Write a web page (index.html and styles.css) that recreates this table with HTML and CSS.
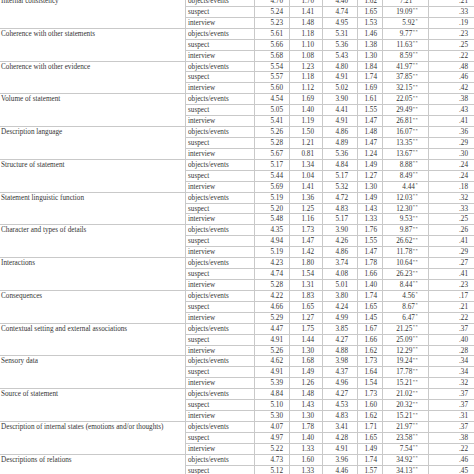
FILE: index.html
```html
<!DOCTYPE html>
<html>
<head>
<meta charset="utf-8">
<link rel="stylesheet" href="styles.css">
</head>
<body>
<div class="tbl">
  <div class="grp">
    <div class="lab">Internal consistency</div>
    <div class="c sub">objects/events</div><div class="c m1">4.70</div><div class="c s1">1.70</div><div class="c m2">4.40</div><div class="c s2">1.62</div><div class="c t">7.21<sup>**</sup></div><div class="c es">.21</div>
    <div class="c sub">suspect</div><div class="c m1">5.24</div><div class="c s1">1.41</div><div class="c m2">4.74</div><div class="c s2">1.65</div><div class="c t">19.09<sup>**</sup></div><div class="c es">.33</div>
    <div class="c sub">interview</div><div class="c m1">5.23</div><div class="c s1">1.48</div><div class="c m2">4.95</div><div class="c s2">1.53</div><div class="c t">5.92<sup>*</sup></div><div class="c es">.19</div>
  </div>
  <div class="grp">
    <div class="lab">Coherence with other statements</div>
    <div class="c sub">objects/events</div><div class="c m1">5.61</div><div class="c s1">1.18</div><div class="c m2">5.31</div><div class="c s2">1.46</div><div class="c t">9.77<sup>**</sup></div><div class="c es">.23</div>
    <div class="c sub">suspect</div><div class="c m1">5.66</div><div class="c s1">1.10</div><div class="c m2">5.36</div><div class="c s2">1.38</div><div class="c t">11.63<sup>**</sup></div><div class="c es">.25</div>
    <div class="c sub">interview</div><div class="c m1">5.68</div><div class="c s1">1.08</div><div class="c m2">5.43</div><div class="c s2">1.30</div><div class="c t">8.59<sup>**</sup></div><div class="c es">.22</div>
  </div>
  <div class="grp">
    <div class="lab">Coherence with other evidence</div>
    <div class="c sub">objects/events</div><div class="c m1">5.54</div><div class="c s1">1.23</div><div class="c m2">4.80</div><div class="c s2">1.84</div><div class="c t">41.97<sup>**</sup></div><div class="c es">.48</div>
    <div class="c sub">suspect</div><div class="c m1">5.57</div><div class="c s1">1.18</div><div class="c m2">4.91</div><div class="c s2">1.74</div><div class="c t">37.85<sup>**</sup></div><div class="c es">.46</div>
    <div class="c sub">interview</div><div class="c m1">5.60</div><div class="c s1">1.12</div><div class="c m2">5.02</div><div class="c s2">1.69</div><div class="c t">32.15<sup>**</sup></div><div class="c es">.42</div>
  </div>
  <div class="grp">
    <div class="lab">Volume of statement</div>
    <div class="c sub">objects/events</div><div class="c m1">4.54</div><div class="c s1">1.69</div><div class="c m2">3.90</div><div class="c s2">1.61</div><div class="c t">22.05<sup>**</sup></div><div class="c es">.38</div>
    <div class="c sub">suspect</div><div class="c m1">5.05</div><div class="c s1">1.40</div><div class="c m2">4.41</div><div class="c s2">1.55</div><div class="c t">29.49<sup>**</sup></div><div class="c es">.43</div>
    <div class="c sub">interview</div><div class="c m1">5.41</div><div class="c s1">1.19</div><div class="c m2">4.91</div><div class="c s2">1.47</div><div class="c t">26.81<sup>**</sup></div><div class="c es">.41</div>
  </div>
  <div class="grp">
    <div class="lab">Description language</div>
    <div class="c sub">objects/events</div><div class="c m1">5.26</div><div class="c s1">1.50</div><div class="c m2">4.86</div><div class="c s2">1.48</div><div class="c t">16.07<sup>**</sup></div><div class="c es">.36</div>
    <div class="c sub">suspect</div><div class="c m1">5.28</div><div class="c s1">1.21</div><div class="c m2">4.89</div><div class="c s2">1.47</div><div class="c t">13.35<sup>**</sup></div><div class="c es">.29</div>
    <div class="c sub">interview</div><div class="c m1">5.67</div><div class="c s1">0.81</div><div class="c m2">5.36</div><div class="c s2">1.24</div><div class="c t">13.67<sup>**</sup></div><div class="c es">.30</div>
  </div>
  <div class="grp">
    <div class="lab">Structure of statement</div>
    <div class="c sub">objects/events</div><div class="c m1">5.17</div><div class="c s1">1.34</div><div class="c m2">4.84</div><div class="c s2">1.49</div><div class="c t">8.88<sup>**</sup></div><div class="c es">.24</div>
    <div class="c sub">suspect</div><div class="c m1">5.44</div><div class="c s1">1.04</div><div class="c m2">5.17</div><div class="c s2">1.27</div><div class="c t">8.49<sup>**</sup></div><div class="c es">.24</div>
    <div class="c sub">interview</div><div class="c m1">5.69</div><div class="c s1">1.41</div><div class="c m2">5.32</div><div class="c s2">1.30</div><div class="c t">4.44<sup>*</sup></div><div class="c es">.18</div>
  </div>
  <div class="grp">
    <div class="lab">Statement linguistic function</div>
    <div class="c sub">objects/events</div><div class="c m1">5.19</div><div class="c s1">1.36</div><div class="c m2">4.72</div><div class="c s2">1.49</div><div class="c t">12.03<sup>**</sup></div><div class="c es">.32</div>
    <div class="c sub">suspect</div><div class="c m1">5.20</div><div class="c s1">1.25</div><div class="c m2">4.83</div><div class="c s2">1.43</div><div class="c t">12.30<sup>**</sup></div><div class="c es">.33</div>
    <div class="c sub">interview</div><div class="c m1">5.48</div><div class="c s1">1.16</div><div class="c m2">5.17</div><div class="c s2">1.33</div><div class="c t">9.53<sup>**</sup></div><div class="c es">.25</div>
  </div>
  <div class="grp">
    <div class="lab">Character and types of details</div>
    <div class="c sub">objects/events</div><div class="c m1">4.35</div><div class="c s1">1.73</div><div class="c m2">3.90</div><div class="c s2">1.76</div><div class="c t">9.87<sup>**</sup></div><div class="c es">.26</div>
    <div class="c sub">suspect</div><div class="c m1">4.94</div><div class="c s1">1.47</div><div class="c m2">4.26</div><div class="c s2">1.55</div><div class="c t">26.62<sup>**</sup></div><div class="c es">.41</div>
    <div class="c sub">interview</div><div class="c m1">5.19</div><div class="c s1">1.42</div><div class="c m2">4.86</div><div class="c s2">1.47</div><div class="c t">11.78<sup>**</sup></div><div class="c es">.29</div>
  </div>
  <div class="grp">
    <div class="lab">Interactions</div>
    <div class="c sub">objects/events</div><div class="c m1">4.23</div><div class="c s1">1.80</div><div class="c m2">3.74</div><div class="c s2">1.78</div><div class="c t">10.64<sup>**</sup></div><div class="c es">.27</div>
    <div class="c sub">suspect</div><div class="c m1">4.74</div><div class="c s1">1.54</div><div class="c m2">4.08</div><div class="c s2">1.66</div><div class="c t">26.23<sup>**</sup></div><div class="c es">.41</div>
    <div class="c sub">interview</div><div class="c m1">5.28</div><div class="c s1">1.31</div><div class="c m2">5.01</div><div class="c s2">1.40</div><div class="c t">8.44<sup>**</sup></div><div class="c es">.23</div>
  </div>
  <div class="grp">
    <div class="lab">Consequences</div>
    <div class="c sub">objects/events</div><div class="c m1">4.22</div><div class="c s1">1.83</div><div class="c m2">3.80</div><div class="c s2">1.74</div><div class="c t">4.56<sup>*</sup></div><div class="c es">.17</div>
    <div class="c sub">suspect</div><div class="c m1">4.66</div><div class="c s1">1.65</div><div class="c m2">4.24</div><div class="c s2">1.65</div><div class="c t">8.67<sup>*</sup></div><div class="c es">.21</div>
    <div class="c sub">interview</div><div class="c m1">5.29</div><div class="c s1">1.27</div><div class="c m2">4.99</div><div class="c s2">1.45</div><div class="c t">6.47<sup>*</sup></div><div class="c es">.22</div>
  </div>
  <div class="grp">
    <div class="lab">Contextual setting and external associations</div>
    <div class="c sub">objects/events</div><div class="c m1">4.47</div><div class="c s1">1.75</div><div class="c m2">3.85</div><div class="c s2">1.67</div><div class="c t">21.25<sup>**</sup></div><div class="c es">.37</div>
    <div class="c sub">suspect</div><div class="c m1">4.91</div><div class="c s1">1.44</div><div class="c m2">4.27</div><div class="c s2">1.66</div><div class="c t">25.09<sup>**</sup></div><div class="c es">.40</div>
    <div class="c sub">interview</div><div class="c m1">5.26</div><div class="c s1">1.30</div><div class="c m2">4.88</div><div class="c s2">1.62</div><div class="c t">12.29<sup>**</sup></div><div class="c es">.28</div>
  </div>
  <div class="grp">
    <div class="lab">Sensory data</div>
    <div class="c sub">objects/events</div><div class="c m1">4.62</div><div class="c s1">1.68</div><div class="c m2">3.98</div><div class="c s2">1.73</div><div class="c t">19.24<sup>**</sup></div><div class="c es">.34</div>
    <div class="c sub">suspect</div><div class="c m1">4.91</div><div class="c s1">1.49</div><div class="c m2">4.37</div><div class="c s2">1.64</div><div class="c t">17.78<sup>**</sup></div><div class="c es">.34</div>
    <div class="c sub">interview</div><div class="c m1">5.39</div><div class="c s1">1.26</div><div class="c m2">4.96</div><div class="c s2">1.54</div><div class="c t">15.21<sup>**</sup></div><div class="c es">.32</div>
  </div>
  <div class="grp">
    <div class="lab">Source of statement</div>
    <div class="c sub">objects/events</div><div class="c m1">4.84</div><div class="c s1">1.48</div><div class="c m2">4.27</div><div class="c s2">1.73</div><div class="c t">21.02<sup>**</sup></div><div class="c es">.37</div>
    <div class="c sub">suspect</div><div class="c m1">5.10</div><div class="c s1">1.43</div><div class="c m2">4.53</div><div class="c s2">1.60</div><div class="c t">20.32<sup>**</sup></div><div class="c es">.37</div>
    <div class="c sub">interview</div><div class="c m1">5.30</div><div class="c s1">1.30</div><div class="c m2">4.83</div><div class="c s2">1.62</div><div class="c t">15.21<sup>**</sup></div><div class="c es">.31</div>
  </div>
  <div class="grp">
    <div class="lab">Description of internal states (emotions and/or thoughts)</div>
    <div class="c sub">objects/events</div><div class="c m1">4.07</div><div class="c s1">1.78</div><div class="c m2">3.41</div><div class="c s2">1.71</div><div class="c t">21.97<sup>**</sup></div><div class="c es">.37</div>
    <div class="c sub">suspect</div><div class="c m1">4.97</div><div class="c s1">1.40</div><div class="c m2">4.28</div><div class="c s2">1.65</div><div class="c t">23.58<sup>**</sup></div><div class="c es">.38</div>
    <div class="c sub">interview</div><div class="c m1">5.22</div><div class="c s1">1.33</div><div class="c m2">4.91</div><div class="c s2">1.49</div><div class="c t">7.54<sup>**</sup></div><div class="c es">.22</div>
  </div>
  <div class="grp">
    <div class="lab">Descriptions of relations</div>
    <div class="c sub">objects/events</div><div class="c m1">4.73</div><div class="c s1">1.60</div><div class="c m2">3.96</div><div class="c s2">1.74</div><div class="c t">34.92<sup>**</sup></div><div class="c es">.46</div>
    <div class="c sub">suspect</div><div class="c m1">5.12</div><div class="c s1">1.33</div><div class="c m2">4.46</div><div class="c s2">1.57</div><div class="c t">34.13<sup>**</sup></div><div class="c es">.45</div>
    <div class="c sub">interview</div><div class="c m1">5.38</div><div class="c s1">1.21</div><div class="c m2">4.92</div><div class="c s2">1.46</div><div class="c t">19.40<sup>**</sup></div><div class="c es">.34</div>
  </div>
</div>
</body>
</html>
```
FILE: styles.css
```css
html, body {
  margin: 0;
  padding: 0;
  background: #ffffff;
  overflow: hidden;
  height: 474px;
}
body {
  font-family: "Liberation Serif", "Times New Roman", serif;
  font-size: 7.2px;
  color: #353535;
}
.tbl {
  margin-top: -5px;
  width: 474px;
}
.grp {
  display: grid;
  grid-template-columns: 185px 69px 35px 33px 35px 25px 46px 46px;
  grid-template-rows: repeat(3, 10.93px);
}
.lab {
  grid-row: span 3;
  border-top: 1px solid #c9c9c9;
  padding-left: 1px;
  line-height: 10px;
  white-space: nowrap;
}
.c {
  border-top: 1px solid #c9c9c9;
  border-left: 1px solid #c9c9c9;
  line-height: 10px;
  white-space: nowrap;
  text-align: right;
}
.sub {
  text-align: left;
  padding-left: 2px;
}
.m1 { padding-right: 6px; }
.s1 { padding-right: 8px; }
.m2 { padding-right: 9px; }
.s2 { padding-right: 5px; }
.t { padding-right: 10px; }
.es { padding-right: 6px; }
sup {
  font-size: 4.6px;
  line-height: 0;
  vertical-align: 2.5px;
  letter-spacing: 0.3px;
  margin-left: 0.5px;
}
```
